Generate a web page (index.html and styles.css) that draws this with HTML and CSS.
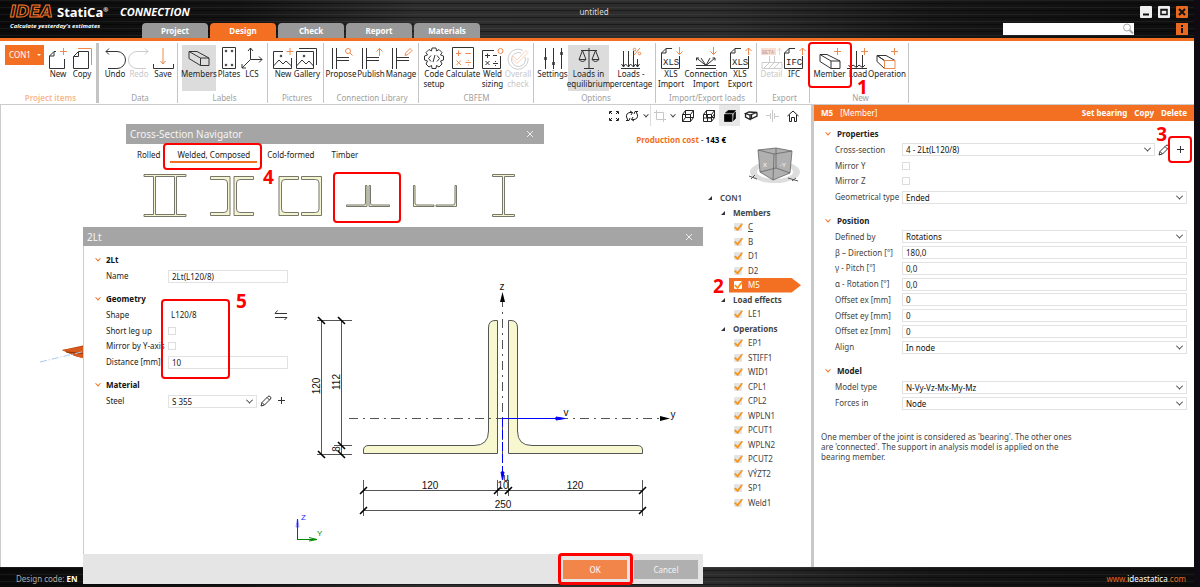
FILE: index.html
```html
<!DOCTYPE html>
<html lang="en">
<head>
<meta charset="utf-8">
<title>untitled - Connection</title>
<link rel="stylesheet" href="styles.css">
</head>
<body>
<svg class="defs" aria-hidden="true">
  <symbol id="box" viewBox="0 0 24 22"><path d="M2 4.500H10L22 11V18.500H13.500L2 11.500ZM2 4.500L13.500 11H22M13.500 11V18.500"/></symbol>
  <symbol id="pencil" viewBox="0 0 12 12"><path d="M1 11L2 7.500L8 1.500Q9 .5 10.300 1.700Q11.500 3 10.500 4L4.500 10ZM2 7.500L4.500 10M7 2.500L9.500 5"/></symbol>
  <symbol id="xdoc" viewBox="0 0 24 22"><path d="M13 1.500H7L2.500 6V21.500H20.500V9M7 1.500V6H2.500"/></symbol>
  <symbol id="frame" viewBox="0 0 24 22"><path d="M3.500 1V22M7.500 1V22M7.500 10.500H20M7.500 13.500H20"/></symbol>
</svg>
<div class="app">
  <header class="top">
    <div class="brand">
      <div class="logo"><span class="idea">IDEA</span><span class="statica">StatiCa<sup>®</sup></span><span class="product">CONNECTION</span></div>
      <div class="tagline">Calculate yesterday's estimates</div>
    </div>
    <div class="doc-title">untitled</div>
    <div class="win">
      <button aria-label="Minimize"><svg viewBox="0 0 12 12"><path d="M3 8.500H9" stroke-width="2"/></svg></button>
      <button aria-label="Maximize"><svg viewBox="0 0 12 12"><path d="M3 3.500H9V8.500H3ZM3 4H9" stroke-width="1.500"/></svg></button>
      <button class="hot" aria-label="Close"><svg viewBox="0 0 12 12"><path d="M3 3L9 9M9 3L3 9" stroke-width="2"/></svg></button>
    </div>
    <nav class="tabs">
      <button>Project</button><button class="on">Design</button><button>Check</button><button>Report</button><button>Materials</button>
    </nav>
    <div class="find">
      <div class="search"><input type="search" aria-label="Search"><svg viewBox="0 0 12 12"><circle cx="5" cy="4.500" r="3.500"/><path d="M7.500 7L11 10.500" stroke-width="2"/></svg></div>
      <button class="info" aria-label="Info"><svg viewBox="0 0 12 12"><path d="M6 2V4M6 5V10" stroke-width="2"/></svg></button>
    </div>
  </header>

  <div class="ribbon">
    <section class="group g-project">
      <div class="tools">
        <button class="combo">CON1 <i class="caret"></i></button>
        <button class="tool"><svg viewBox="0 0 24 22"><path d="M10 4.500H8L3.500 9V21.500H18.500V12M8 4.500V9H3.500"/><path class="o" d="M17.500 1V8M14 4.500H21"/></svg>New</button>
        <button class="tool"><svg viewBox="0 0 24 22"><path d="M8.500 4.500H18.500V21.500H3.500V9.500ZM8.500 4.500V9.500H3.500"/><path class="o" d="M8 1.500H21.500V18"/></svg>Copy</button>
      </div>
      <h2>Project items</h2>
    </section>
    <section class="group g-data">
      <div class="tools">
        <button class="tool"><svg viewBox="0 0 24 22"><path d="M3 4.500H14A8.500 8.500 0 0 1 14 21.500H5M6 1.500L3 4.500L6 7.500"/></svg>Undo</button>
        <button class="tool" disabled><svg viewBox="0 0 24 22"><path d="M21 4.500H10A8.500 8.500 0 0 0 10 21.500H19M18 1.500L21 4.500L18 7.500"/></svg>Redo</button>
        <button class="tool"><svg viewBox="0 0 24 22"><path d="M2.500 17V21.500H22.500V17"/><path class="o" d="M12 1V17M9.500 14L12 17L14.500 14"/></svg>Save</button>
      </div>
      <h2>Data</h2>
    </section>
    <section class="group g-labels">
      <div class="tools">
        <button class="tool on"><svg><use href="#box"/></svg>Members</button>
        <button class="tool"><svg viewBox="0 0 24 22"><path d="M5.500 .5H18.500V21.500H5.500Z"/><g class="d"><circle cx="9" cy="4" r="1"/><circle cx="15" cy="4" r="1"/><circle cx="9" cy="18" r="1"/><circle cx="15" cy="18" r="1"/></g></svg>Plates</button>
        <button class="tool"><svg viewBox="0 0 24 22"><path d="M10.500 12.500V1M8 4L10.500 1L13 4M10.500 12.500H22M19 9.500L22 12.500L19 15.500M10.500 12.500L2 21M2 17V21H6"/></svg>LCS</button>
      </div>
      <h2>Labels</h2>
    </section>
    <section class="group g-pics">
      <div class="tools">
        <button class="tool"><svg viewBox="0 0 24 22"><path d="M12 4.500H2.500V21.500H20.500V11M2.500 19L8 13L12 17L15 14L20.500 19"/><circle class="d" cx="10" cy="9" r="1"/><path class="o" d="M19 1V8M15.500 4.500H22.500"/></svg>New</button>
        <button class="tool"><svg viewBox="0 0 24 22"><path d="M1.500 4.500H18.500V21.500H1.500ZM1.500 19L7 13L11 17L14 14L18.500 19M4 1.500H21.500V18"/><circle class="d" cx="9" cy="9" r="1"/></svg>Gallery</button>
      </div>
      <h2>Pictures</h2>
    </section>
    <section class="group g-lib">
      <div class="tools">
        <button class="tool"><svg viewBox="0 0 24 22"><use href="#frame"/><g class="o"><circle cx="19" cy="4" r="2.500"/><path d="M21 6L23.500 8.500"/></g></svg>Propose</button>
        <button class="tool"><svg viewBox="0 0 24 22"><use href="#frame"/><path class="o" d="M20.500 9V1.500M17.500 4.500L20.500 1.500L23.500 4.500"/></svg>Publish</button>
        <button class="tool"><svg viewBox="0 0 24 22"><use href="#frame"/><path class="o" d="M16 8.500L17 5.500L21 1.500L23 3.500L19 7.500Z"/></svg>Manage</button>
      </div>
      <h2>Connection Library</h2>
    </section>
    <section class="group g-cbfem">
      <div class="tools">
        <button class="tool"><svg viewBox="0 0 24 22"><path d="M10 1H14L14.500 4L17 2.500L20 5.500L18.500 8L21.500 9V13L18.500 14L20 17L17 20L14.500 18.500L14 21.500H10L9.500 18.500L7 20L4 17L5.500 14L2.500 13V9L5.500 8L4 5.500L7 2.500L9.500 4Z"/><path d="M9 8.500L6.500 11.500L9 14.500M15 8.500L17.500 11.500L15 14.500M13 8L11 15"/></svg>Code<br>setup</button>
        <button class="tool"><svg viewBox="0 0 24 22"><path d="M1.500 .5H22.500V21.500H1.500Z"/><path class="o" d="M7.500 3.500V9M5 6.500H10M14.500 6.500H20M5.500 13.500L10 18M10 13.500L5.500 18M14.500 15.500H20M17.300 13V14M17.300 17.500V18.500"/></svg>Calculate</button>
        <button class="tool"><svg viewBox="0 0 24 22"><path d="M13 3.500H1.500V21.500H19.500V9M6.500 6.500V11M4 8.500H9M12 8.500H16M4.500 14L8.500 18M8.500 14L4.500 18M12 16.500H17M14.500 14V15M14.500 18V19"/><circle class="o" cx="19.500" cy="4" r="2.500"/></svg>Weld<br>sizing</button>
        <button class="tool" disabled><svg viewBox="0 0 24 22"><path d="M17 3.500A10 10 0 1 0 22 11M15 6A7 7 0 1 0 19 10"/><path class="o" d="M7 9L11 13L20 3.500L22 5.500L11 16.500L5.500 11Z"/></svg>Overall<br>check</button>
      </div>
      <h2>CBFEM</h2>
    </section>
    <section class="group g-options">
      <div class="tools">
        <button class="tool"><svg viewBox="0 0 24 22"><path d="M4.500 1V22M12.500 1V22M20.500 1V22"/><path d="M4.500 10V13M12.500 15V18M20.500 5V8" stroke-width="2.500"/></svg>Settings</button>
        <button class="tool on"><svg viewBox="0 0 24 22"><path d="M12 1V21M7 21.500H17M4 3.500H20M5.500 3.500L2 12.500H9L5.500 3.500M18.500 3.500L15 12.500H22L18.500 3.500M2 12.500Q5.500 16.500 9 12.500M15 12.500Q18.500 16.500 22 12.500"/></svg>Loads in<br>equilibrium</button>
        <button class="tool"><svg viewBox="0 0 24 22"><path d="M2 21.500H21M4.500 4V20M9.500 4V20M14.500 4V20M18.500 12V20M2.500 17L4.500 20L6.500 17L9.500 20L11.500 17L14.500 20L16.500 17L18.500 20L20.500 17"/><g class="o"><path d="M15 8L21 1"/><circle cx="15.500" cy="2.500" r="1.300"/><circle cx="20.500" cy="6.500" r="1.300"/></g></svg>Loads -<br>percentage</button>
      </div>
      <h2>Options</h2>
    </section>
    <section class="group g-io">
      <div class="tools">
        <button class="tool"><svg viewBox="0 0 24 22"><use href="#xdoc"/><text x="4" y="18">XLS</text><path class="o" d="M20.500 0V7.500M17.500 4.500L20.500 7.500L23.500 4.500"/></svg>XLS<br>Import</button>
        <button class="tool"><svg viewBox="0 0 24 22"><path d="M2 18.500H22M2 21.500H22M12 18.500L2.500 11M5 11H2.500V13.500M12 18.500L21 11M18.500 11H21V13.500M7 11L12 18.500L16 11"/><path class="o" d="M19.500 0V7.500M16.500 4.500L19.500 7.500L22.500 4.500"/></svg>Connection<br>Import</button>
        <button class="tool"><svg viewBox="0 0 24 22"><use href="#xdoc"/><text x="4" y="18">XLS</text><path class="o" d="M20.500 8V1M17.500 4L20.500 1L23.500 4"/></svg>XLS<br>Export</button>
      </div>
      <h2>Import/Export loads</h2>
    </section>
    <section class="group g-export">
      <div class="tools">
        <button class="tool" disabled><svg viewBox="0 0 24 22"><path class="beta" d="M1 1H16V8H1Z"/><text class="tiny" x="2" y="7">BETA</text><path d="M2 15.500H22V21.500H2ZM4 21L9 16M9 21L14 16M14 21L19 16M9.500 9V15.500M14.500 9V15.500"/><path class="o" d="M19.500 8V1M17 4L19.500 1L22 4"/></svg>Detail</button>
        <button class="tool"><svg viewBox="0 0 24 22"><use href="#xdoc"/><text x="4" y="18">IFC</text><path class="o" d="M20.500 8V1M17.500 4L20.500 1L23.500 4"/></svg>IFC</button>
      </div>
      <h2>Export</h2>
    </section>
    <section class="group g-new">
      <div class="tools">
        <button class="tool"><svg viewBox="0 0 24 22"><path d="M2 7.500H9L22 14V21.500H13L2 14.500ZM2 7.500L13 14H22M13 14V21.500"/><path class="o" d="M19.500 1V8M16 4.500H23"/></svg>Member</button>
        <button class="tool"><svg viewBox="0 0 24 22"><path d="M1 21.500H21M4.500 15V20M10.500 4V20M16.500 8V20M2.500 18L4.500 20.500L7 18L10.500 20.500L13 18L16.500 20.500L19 18"/><path class="o" d="M18.500 1V8M15 4.500H22"/></svg>Load</button>
        <button class="tool"><svg viewBox="0 0 24 22"><path d="M9.500 13.500L2 8.500V14.500L9.500 21.500V13.500L2 8.500H11L20 13.500"/><path class="o" d="M9.500 13.500H20V21.500H9.500ZM19.500 1V8M16 4.500H23"/></svg>Operation</button>
      </div>
      <h2>New</h2>
    </section>
  </div>

  <main class="work">
    <div class="canvas">
      <svg class="beam" viewBox="0 0 50 24" aria-hidden="true"><path d="M22 8L50 2V18L35 14Z" fill="#b84a12"/><path d="M22 8L42 5L50 7V18L35 14Z" fill="#d9591a"/><path d="M26 10L50 12" stroke="#8d3408"/><path d="M0 20L50 8" fill="none" stroke="#a9c9ee" stroke-dasharray="7 2 1 2"/></svg>
      <div class="viewbar">
        <button aria-label="Zoom all"><svg viewBox="0 0 14 14"><path d="M2.500 5V2.500H5M9 2.500H11.500V5M11.500 9V11.500H9M5 11.500H2.500V9M3 3L5 5M11 3L9 5M11 11L9 9M3 11L5 9"/></svg></button>
        <button aria-label="Rotate"><svg viewBox="0 0 14 14"><path d="M5 2L7.500 3.500L6 6M7.500 3.500H5Q1 4 1.500 8L3 11.500M1 11.500H4L5 9M9 12L6.500 10.500L8 8M6.500 10.500H9Q13 10 12.500 6L11 2.500M13 2.500H10L9 5"/></svg></button>
        <button class="mini" aria-label="Rotate options"><i class="chev"></i></button>
        <button class="crop" disabled aria-label="Clip"><svg viewBox="0 0 14 14"><path d="M3.500 1V10.500H13M1 3.500H10.500V13"/></svg></button>
        <button class="mini" aria-label="Clip options"><i class="chev"></i></button>
        <button aria-label="Wireframe"><svg viewBox="0 0 14 14"><path d="M1.500 5.500L4.500 1.500H12.500L9.500 5.500ZM1.500 5.500V12.500H9.500V5.500M12.500 1.500V8.500L9.500 12.500M4.500 1.500V8.500H12.500M1.500 12.500L4.500 8.500"/></svg></button>
        <button aria-label="Transparent"><svg viewBox="0 0 14 14"><path d="M1.500 5.500L4.500 1.500H12.500L9.500 5.500ZM1.500 5.500V12.500H9.500V5.500M12.500 1.500V8.500L9.500 12.500M5.500 5.500V12.500M1.500 9H9.500L12.500 5M4.500 1.500V8.500H12.500"/></svg></button>
        <button class="on" aria-label="Solid"><svg viewBox="0 0 14 14"><path d="M1.500 5.500H9V12.500H1.500Z" fill="#000"/><path d="M2.500 4L5 1.500H12.500L10.500 4ZM11 5L12.500 3V9.500L10.500 11.500Z" fill="#000"/></svg></button>
        <button aria-label="Members"><svg viewBox="0 0 14 14"><path d="M1.500 4.500L5 3L13 3.500L6 6ZM1.500 4.500V8L6 10.500V6M6 10.500L13 7V3.500M7.500 6V9.500" stroke-width="1.300"/></svg></button>
        <button disabled aria-label="Mirror"><svg viewBox="0 0 14 14"><path d="M7.500 1V13M1 6.500H5.500V4M5.500 6.500V10M14 7.500H9.500V4M9.500 7.500V10"/></svg></button>
        <button aria-label="Home"><svg viewBox="0 0 14 14"><path d="M1.500 7L7 2L12.500 7M3.500 6V12.500H5.500V8.500H8.500V12.500H10.500V6"/></svg></button>
      </div>
      <p class="cost"><b>Production cost</b> - <strong>143 €</strong></p>
      <svg class="viewcube" viewBox="0 0 54 40" aria-hidden="true"><ellipse cx="27" cy="26" rx="25" ry="11" fill="#ddd" stroke="none"/><ellipse cx="27" cy="26" rx="18" ry="7" fill="#fff" stroke="none"/><path d="M10 4L28 2L44 5L42 27L25 34L12 26Z" fill="#b0b0b0" stroke="#666" stroke-width=".8"/><path d="M10 4L26 8L44 5M26 8L25 34M28 2V22L12 26M28 22L42 27" fill="none" stroke="#666" stroke-width=".8"/><path d="M1 30L9 33M3 33L7 29M40 32L50 35M44 35L48 32" stroke="#555"/><g class="cube-text"><text x="15" y="21">X</text><text x="32" y="21">-Y</text></g></svg>
      <ul class="tree">
        <li class="root"><i></i>CON1</li>
        <li class="branch"><i></i>Members</li>
        <li><label><input type="checkbox" checked><u>C</u></label></li>
        <li><label><input type="checkbox" checked>B</label></li>
        <li><label><input type="checkbox" checked>D1</label></li>
        <li><label><input type="checkbox" checked>D2</label></li>
        <li class="sel"><label><input type="checkbox" checked>M5</label></li>
        <li class="branch"><i></i>Load effects</li>
        <li><label><input type="checkbox" checked>LE1</label></li>
        <li class="branch"><i></i>Operations</li>
        <li><label><input type="checkbox" checked>EP1</label></li>
        <li><label><input type="checkbox" checked>STIFF1</label></li>
        <li><label><input type="checkbox" checked>WID1</label></li>
        <li><label><input type="checkbox" checked>CPL1</label></li>
        <li><label><input type="checkbox" checked>CPL2</label></li>
        <li><label><input type="checkbox" checked>WPLN1</label></li>
        <li><label><input type="checkbox" checked>PCUT1</label></li>
        <li><label><input type="checkbox" checked>WPLN2</label></li>
        <li><label><input type="checkbox" checked>PCUT2</label></li>
        <li><label><input type="checkbox" checked>VÝZT2</label></li>
        <li><label><input type="checkbox" checked>SP1</label></li>
        <li><label><input type="checkbox" checked>Weld1</label></li>
      </ul>
    </div>

    <aside class="panel">
      <div class="panel-head"><b>M5</b><span>[Member]</span><button class="push">Set bearing</button><button>Copy</button><button>Delete</button></div>
      <div class="props">
        <h3><i class="chev"></i>Properties</h3>
        <div class="rows rows-4">
          <div class="row"><label for="cs">Cross-section</label><span class="sel-wrap"><select id="cs"><option>4 - 2Lt(L120/8)</option></select></span><button class="ico" aria-label="Edit cross-section"><svg><use href="#pencil"/></svg></button><button class="ico add" aria-label="New cross-section"><svg viewBox="0 0 12 12"><path d="M5.500 2V9M2 5.500H9"/></svg></button></div>
          <div class="row"><label for="my">Mirror Y</label><input id="my" type="checkbox"></div>
          <div class="row"><label for="mz">Mirror Z</label><input id="mz" type="checkbox"></div>
          <div class="row"><label for="gt">Geometrical type</label><span class="sel-wrap"><select id="gt"><option>Ended</option></select></span></div>
        </div>
        <h3><i class="chev"></i>Position</h3>
        <div class="rows rows-8">
          <div class="row"><label for="db">Defined by</label><span class="sel-wrap"><select id="db"><option>Rotations</option></select></span></div>
          <div class="row"><label for="b">β – Direction [°]</label><input id="b" type="text" value="180,0"></div>
          <div class="row"><label for="g">γ - Pitch [°]</label><input id="g" type="text" value="0,0"></div>
          <div class="row"><label for="a">α - Rotation [°]</label><input id="a" type="text" value="0,0"></div>
          <div class="row"><label for="ex">Offset ex [mm]</label><input id="ex" type="text" value="0"></div>
          <div class="row"><label for="ey">Offset ey [mm]</label><input id="ey" type="text" value="0"></div>
          <div class="row"><label for="ez">Offset ez [mm]</label><input id="ez" type="text" value="0"></div>
          <div class="row"><label for="al">Align</label><span class="sel-wrap"><select id="al"><option>In node</option></select></span></div>
        </div>
        <h3><i class="chev"></i>Model</h3>
        <div class="rows rows-2">
          <div class="row"><label for="mt">Model type</label><span class="sel-wrap"><select id="mt"><option>N-Vy-Vz-Mx-My-Mz</option></select></span></div>
          <div class="row"><label for="fi">Forces in</label><span class="sel-wrap"><select id="fi"><option>Node</option></select></span></div>
        </div>
      </div>
      <p class="hint">One member of the joint is considered as 'bearing'. The other ones are 'connected'. The support in analysis model is applied on the bearing member.</p>
    </aside>
  </main>

  <footer class="status"><span>Design code: <b>EN</b></span><a href="#"><em>www.</em>ideastatica<em>.com</em></a></footer>

  <div class="dialog navigator" role="dialog" aria-label="Cross-Section Navigator">
    <div class="dialog-head">Cross-Section Navigator<button aria-label="Close"><svg viewBox="0 0 8 8"><path d="M1 1L7 7M7 1L1 7"/></svg></button></div>
    <div class="nav-tabs"><button>Rolled</button><button class="on">Welded, Composed</button><button>Cold-formed</button><button>Timber</button></div>
    <div class="shapes">
      <button aria-label="Double I"><svg viewBox="0 0 46 48"><path d="M2 3.500H44V5.500H34.500V43.500H44V45.500H2V43.500H11.500V5.500H2ZM13.500 5.500V43.500H32.500V5.500Z" fill-rule="evenodd"/></svg></button>
      <button aria-label="Back to back channels"><svg viewBox="0 0 46 48"><path d="M1.500 5.500H21V44.500H1.500V41.500H15Q18.500 41.500 18.500 38V12Q18.500 8.500 15 8.500H1.500ZM44.500 5.500H25V44.500H44.500V41.500H31Q27.500 41.500 27.500 38V12Q27.500 8.500 31 8.500H44.500Z"/></svg></button>
      <button aria-label="Facing channels"><svg viewBox="0 0 46 48"><path d="M21.500 5.500H2V44.500H21.500V41.500H8Q4.500 41.500 4.500 38V12Q4.500 8.500 8 8.500H21.500ZM24.500 5.500H44.500V44.500H24.500V41.500H38.500Q42 41.500 42 38V12Q42 8.500 38.500 8.500H24.500Z"/></svg></button>
      <button aria-label="Double L back to back"><svg viewBox="0 0 46 48"><path d="M20.500 14.500H22V35.500H1.500V34H19Q20.500 34 20.500 32ZM25.500 14.500H24V35.500H44.500V34H27Q25.500 34 25.500 32Z"/></svg></button>
      <button aria-label="Double L facing"><svg viewBox="0 0 46 48"><path d="M1.500 14.500H3V32Q3 34 5 34H22V35.500H1.500ZM44.500 14.500H43V32Q43 34 41 34H24V35.500H44.500Z"/></svg></button>
      <button aria-label="Welded I"><svg viewBox="0 0 46 48"><path d="M12.500 3.500H34.500V5.500H24.500V43.500H34.500V45.500H12.500V43.500H22.500V5.500H12.500Z"/></svg></button>
    </div>
  </div>

  <div class="dialog editor" role="dialog" aria-label="2Lt">
    <div class="dialog-head">2Lt<button aria-label="Close"><svg viewBox="0 0 8 8"><path d="M1 1L7 7M7 1L1 7"/></svg></button></div>
    <div class="editor-body">
      <div class="props">
        <h3><i class="chev"></i>2Lt</h3>
        <div class="rows rows-1"><div class="row"><label for="nm">Name</label><input id="nm" type="text" value="2Lt(L120/8)"></div></div>
        <h3><i class="chev"></i>Geometry</h3>
        <div class="rows rows-4">
          <div class="row"><span class="lab">Shape</span><span class="val">L120/8</span><button class="ico swap" aria-label="Swap shape"><svg viewBox="0 0 14 12"><path d="M3.500 1.500L1 4.500H13M10.500 11L13 8.500H1"/></svg></button></div>
          <div class="row"><label for="sl">Short leg up</label><input id="sl" type="checkbox"></div>
          <div class="row"><label for="ym">Mirror by Y-axis</label><input id="ym" type="checkbox"></div>
          <div class="row"><label for="ds">Distance [mm]</label><input id="ds" type="text" value="10"></div>
        </div>
        <h3><i class="chev"></i>Material</h3>
        <div class="rows rows-1"><div class="row"><label for="st">Steel</label><span class="sel-wrap"><select id="st"><option>S 355</option></select></span><button class="ico" aria-label="Edit material"><svg><use href="#pencil"/></svg></button><button class="ico add" aria-label="New material"><svg viewBox="0 0 12 12"><path d="M5.500 2V9M2 5.500H9"/></svg></button></div></div>
      </div>
      <svg class="drawing" viewBox="301 246 402 308" role="img" aria-label="Section 2Lt">
        <g fill="#f8f8d0" stroke="#555"><path d="M497.500 320.500V453.500H363.500V450Q363.500 445.500 369 445.500H474Q488.500 445.500 488.500 431V328Q488.500 320.500 495 320.500Z"/><path d="M508.500 320.500V453.500H642.500V450Q642.500 445.500 637 445.500H532Q517.500 445.500 517.500 431V328Q517.500 320.500 511 320.500Z"/></g>
        <g fill="none" stroke="#555"><path d="M349 418.500H664" stroke-dasharray="9 5 2 5"/><path d="M502.500 298V470" stroke-dasharray="9 5 2 5"/><path d="M321.500 320V454M341.500 320V454M317 320.500H352M334 445.500H352M317 454.500H352M363.500 480V516M642.500 480V516M497.500 480V496M508.500 480V496M363 490.500H643M363 510.500H643"/></g>
        <path class="slash" d="M318 317L325 324M338 317L345 324M338 442L345 449M318 451L325 458M338 451L345 458M360 494L367 487M494 494L501 487M505 494L512 487M639 494L646 487M360 514L367 507M639 514L646 507"/>
        <path d="M502.500 292L505 302H500ZM670 418.500L660 416V421Z"/>
        <g stroke="#00f" fill="#00f"><path d="M502 418.500H558" fill="none"/><path d="M502.500 418V472" stroke-dasharray="9 3" fill="none"/><path d="M565 418.500L556 417V420ZM502.500 480L501 472H504Z"/></g>
        <g class="dims"><text x="502" y="290">z</text><text x="673" y="418">y</text><text x="566" y="416">v</text><text x="506" y="481">u</text><text x="430" y="489">120</text><text x="503" y="489">10</text><text x="575" y="489">120</text><text x="503" y="508">250</text><text transform="translate(320 386) rotate(-90)">120</text><text transform="translate(340 382) rotate(-90)">112</text><text transform="translate(340 449) rotate(-90)">8</text></g>
      </svg>
      <svg class="axes" viewBox="0 0 34 28" aria-hidden="true"><path d="M4.500 26V6" stroke="#22f"/><path d="M4.500 6L3 14H6Z" stroke="#22f" stroke-width=".5"/><path d="M4 26.500H24M16 24.500L24 26.500L16 28" stroke="#080" fill="none"/><text x="8" y="7" fill="#22f">Z</text><text x="24" y="23" fill="#080">Y</text></svg>
    </div>
    <div class="dialog-foot"><button class="ok">OK</button><button>Cancel</button></div>
  </div>

  <div class="mark m1"></div><div class="mark m3"></div><div class="mark m4a"></div><div class="mark m4b"></div><div class="mark m5"></div><div class="mark m6"></div>
  <b class="num n1">1</b><b class="num n2">2</b><b class="num n3">3</b><b class="num n4">4</b><b class="num n5">5</b>
</div>
</body>
</html>
```
FILE: styles.css
```css
* { box-sizing: border-box; }
body { margin: 0; background: #100b12; font: 8px/10px "Noto Sans", "Open Sans", sans-serif; color: #222; }
button, input, select { font: inherit; color: inherit; margin: 0; padding: 0; border: 0; background: none; border-radius: 0; outline: none; }
button { white-space: nowrap; }
h2, h3, p, ul { margin: 0; padding: 0; font-size: inherit; }
svg { display: block; fill: none; stroke: #333; overflow: visible; }
.defs { position: absolute; width: 0; height: 0; }
.app { position: relative; display: flex; flex-direction: column; min-height: 100vh; margin-right: 6px; }

.top, .status {
  background: repeating-linear-gradient(180deg, rgba(255,255,255,.06) 0 1px, transparent 1px 3px, rgba(0,0,0,.4) 3px 4px, transparent 4px 7px),
    linear-gradient(90deg, #0a0a0a, #131313 20%, #2d2d2d 35%, #2c2c2c 60%, #161616 78%, #0d0d0d);
}
.top { display: grid; grid-template-columns: 142px 1fr auto; grid-template-rows: 23px 15px; border-bottom: 3px solid #f36f21; height: 41px; }
.brand { grid-area: 1 / 1 / 3 / 2; padding: 3px 0 0 10px; color: #fff; }
.logo { display: flex; align-items: center; height: 18px; white-space: nowrap; font-weight: 700; }
.logo span { flex: none; }
.idea { font: italic 700 16px/16px "DejaVu Sans", sans-serif; color: #111; -webkit-text-stroke: 1px #ff7a26; width: 47px; }
.statica { font-size: 13px; width: 63px; }
.statica sup { font-size: 6px; line-height: 6px; }
.product { font: italic 700 11px/12px "Open Sans", sans-serif; }
.tagline { font: italic 700 6px/10px "Open Sans", sans-serif; }
.doc-title { grid-area: 1 / 1 / 2 / 4; text-align: center; padding: 7px 6px 0 0; color: #ddd; }
.win { grid-area: 1 / 3; display: flex; justify-content: flex-end; gap: 6px; padding: 6px 6px 0 0; }
.win button { width: 12px; height: 12px; background: #eee; border-radius: 1px; }
.win .hot, .info { background: #e8691f; }
.win svg, .info svg { width: 12px; height: 12px; stroke: #111; }
.tabs { display: flex; gap: 2px; }
.tabs button { width: 66px; height: 15px; background: #999; color: #fff; font-weight: 700; border-radius: 4px 4px 0 0; }
.tabs .on { background: #f36f21; }
.find { display: flex; gap: 42px; padding-right: 6px; }
.search { display: flex; width: 131px; height: 12px; background: #fff; }
.search input { flex: 1; min-width: 0; appearance: none; }
.search svg { width: 12px; height: 12px; stroke: #aaa; }
.info { width: 12px; height: 12px; }

.ribbon { display: flex; background: #fff; height: 64px; border-bottom: 1px solid #ccc; }
.group { display: flex; flex-direction: column; justify-content: space-between; margin-top: 2px; border-right: 1px solid #c4c4c4; padding: 2px 0 0 3px; height: 60px; }
.tools { display: grid; height: 46px; }
.group h2 { font-weight: 400; text-align: center; color: #a0a0a0; height: 10px; white-space: nowrap; }
.g-project { width: 99px; border-right-width: 3px; padding-left: 5px; } .g-project .tools { grid-template-columns: 41px 24px 24px; }
.group.g-project h2 { color: #f9b78f; font-weight: 600; }
.g-data { width: 79px; padding-left: 4px; } .g-data .tools { grid-template-columns: 24px 24px 24px; }
.g-labels { width: 90px; padding-left: 4px; } .g-labels .tools { grid-template-columns: 34px 26px 20px; }
.g-pics { width: 56px; } .g-pics .tools { grid-template-columns: 24px 24px; }
.g-lib { width: 95px; padding-left: 2px; } .g-lib .tools { grid-template-columns: 30px 30px 30px; }
.g-cbfem { width: 115px; padding-left: 1px; } .g-cbfem .tools { grid-template-columns: 28px 30px 29px 22px; }
.g-options { width: 122px; } .g-options .tools { grid-template-columns: 31px 41px 44px; }
.g-io { width: 101px; padding-left: 2px; } .g-io .tools { grid-template-columns: 26px 44px 24px; }
.g-export { width: 53px; } .g-export .tools { grid-template-columns: 23px 22px; }
.g-new { width: 99px; } .g-new .tools { grid-template-columns: 33px 24px 34px; }
.tool { display: flex; flex-direction: column; align-items: center; text-align: center; line-height: 10px; height: 46px; padding-top: 2px; }
.tool svg { width: 24px; height: 22px; flex: none; }
.tool.on { background: #dcdcdc; }
.tool:disabled { color: #c8c8c8; }
.tool:disabled svg { stroke: #ccc; }
.tool svg .o { stroke: #ee8a50; }
.tool:disabled svg .o { stroke: #fbd3bd; }
.tool .d { fill: #333; stroke-width: .5px; }
.tool text { font: 9px "Liberation Mono", monospace; fill: #222; stroke: none; }
.tool .tiny { font-size: 5px; fill: #b99; }
.tool .beta { fill: #f8ddd0; stroke: none; }
.combo { display: flex; align-items: center; justify-content: space-between; width: 39px; height: 20px; padding: 0 3px 0 4px; background: #f36f21; color: #fff; }
.caret { border: 2px solid transparent; border-top-color: #fff; border-bottom: 0; }

.work { flex: 1; display: flex; background: #fff; }
.canvas { position: relative; flex: 1; display: flex; flex-direction: column; align-items: flex-end; border-left: 1px solid #ccc; border-right: 3px solid #c9c9c9; }
.beam { position: absolute; left: 39px; top: 237px; width: 50px; height: 24px; stroke: none; }
.viewbar { display: flex; height: 21px; padding-right: 8px; }
.viewbar button { display: flex; width: 21px; align-items: center; justify-content: center; }
.viewbar button:first-child { width: 18px; }
.viewbar button:nth-child(2) { width: 18px; }
.viewbar svg { flex: none; width: 14px; height: 14px; stroke: #222; }
.viewbar .mini { width: 9px; }
.viewbar .crop { width: 18px; border-left: 1px solid #ddd; }
.viewbar button:disabled svg { stroke: #c8c8c8; }
.viewbar .on { background: #e8e8e8; }
.chev { display: block; flex: none; width: 4px; height: 4px; border: solid #444; border-width: 0 1px 1px 0; transform: rotate(45deg) translate(-1px, -1px); }
.cost { margin: 9px 85px 0 0; white-space: nowrap; }
.cost b { color: #f36f21; } .cost strong { color: #000; }
.viewcube { width: 54px; height: 40px; margin: 1px 9px 0 0; }
.cube-text { font: 6px "Liberation Sans", sans-serif; fill: #fff; stroke: none; }
.tree { display: grid; grid-auto-rows: 1fr; list-style: none; width: 107px; min-height: 319px; margin-top: 5px; color: #444; }
.tree li { display: flex; align-items: center; padding-left: 30px; }
.tree label { display: flex; align-items: center; gap: 6px; }
.tree .root, .tree .branch { font-weight: 700; gap: 8px; }
.tree .root { padding-left: 4px; font-weight: 600; } .tree .branch { padding-left: 17px; }
.tree li i { border: 2px solid transparent; border-right-color: #333; border-bottom-color: #333; }
.tree .sel { margin: 0 10px 0 25px; padding-left: 5px; color: #fff; background: #f36f21; clip-path: polygon(0 0, 87% 0, 100% 50%, 87% 100%, 0 100%); }
.tree input { appearance: none; width: 8px; height: 8px; background: #e4e4e4; border-radius: 1px; }
.tree input::before { content: ""; display: block; width: 9px; height: 8px; background: #f7941d; clip-path: polygon(0 55%, 18% 42%, 38% 66%, 85% 0, 100% 10%, 42% 100%); }
.tree .sel input { background: #fff; }

.panel { width: 380px; }
.panel-head { display: flex; align-items: center; gap: 7px; height: 16px; padding: 0 7px; background: #f36f21; color: #fff; }
.panel-head button { font-weight: 700; } .panel-head .push { margin-left: auto; }
.props { padding: 5px 7px 0 10px; }
.props h3 { display: flex; align-items: center; gap: 7px; height: 16px; font-weight: 700; }
.props .chev { border-color: #f36f21; }
.props h3 .chev { margin-left: 2px; }
.rows { display: grid; grid-template-columns: minmax(0, 1fr); grid-auto-rows: 1fr; margin-bottom: 8px; padding-left: 11px; }
.rows-1 { min-height: 16px; } .rows-2 { min-height: 32px; } .rows-4 { min-height: 63px; } .rows-8 { min-height: 126px; }
.row { display: flex; align-items: center; }
.row label, .row .lab { flex: none; width: 67px; white-space: nowrap; color: #444; }
.row input[type=text], .row .sel-wrap { flex: 1; min-width: 0; height: 13px; border: 1px solid #e2e2e2; padding-left: 3px; line-height: 11px; }
.row .sel-wrap { display: flex; align-items: center; padding-right: 4px; }
.sel-wrap select { flex: 1; min-width: 0; appearance: none; color: #111; }
.sel-wrap::after { content: ""; width: 4px; height: 4px; border: solid #444; border-width: 0 1px 1px 0; transform: rotate(45deg) translate(-1px, -1px); }
.row input[type=checkbox] { appearance: none; width: 8px; height: 8px; border: 1px solid #ddd; }
.ico, .ico svg { width: 12px; height: 12px; }
.row .ico { margin-left: 3px; } .row .add { margin-left: 5px; }
.hint { width: 262px; margin: 21px 0 0; padding-left: 7px; color: #444; }

.status { display: flex; justify-content: space-between; align-items: center; height: 20px; padding: 4px 8px 0 16px; color: #aaa; }
.status b, .status a { color: #fff; text-decoration: none; }
.status em { font-style: normal; color: #e8691f; }

.dialog { position: absolute; background: #fff; }
.navigator { left: 126px; top: 124px; width: 418px; height: 103px; }
.editor { left: 83px; top: 227px; width: 620px; display: flex; flex-direction: column; }
.dialog-head { display: flex; justify-content: space-between; align-items: center; height: 20px; padding: 0 10px 0 4px; background: #a5a5a5; color: #f4f4f4; font-size: 10px; }
.editor .dialog-head { height: 19px; }
.dialog-head svg { width: 8px; height: 8px; stroke: #fff; stroke-width: .8px; }
.nav-tabs { display: flex; gap: 3px; padding: 5px 0 0 4px; height: 24px; }
.nav-tabs button { height: 14px; padding: 0 7px; border-bottom: 2px solid transparent; }
.nav-tabs .on { border-bottom-color: #f36f21; }
.shapes { display: grid; grid-template-columns: repeat(6, 1fr); width: 406px; margin: 3px 0 0 5px; }
.shapes svg { width: 46px; height: 48px; margin: 0 auto; fill: #f4f4d0; stroke: #77776a; }
.editor-body { display: grid; grid-template-columns: 217px 1fr; border-left: 1px solid #ccc; }
.editor .props { grid-area: 1 / 1; padding: 6px 13px 0 10px; }
.editor .rows { padding-left: 12px; margin-bottom: 7px; }
.editor .props h3 { color: #111; gap: 6px; }
.editor label, .editor .lab { width: 62px; color: #222; }
.editor .row .add { margin-left: 4px; }
.val { flex: 1; padding-left: 3px; }
.row .swap, .swap svg { width: 14px; }
.drawing { grid-area: 1 / 2; width: 402px; height: 308px; fill: #000; stroke: none; }
.slash { stroke: #000; stroke-width: 1.6px; fill: none; }
.dims { font: 10px "Liberation Sans", Arial, sans-serif; text-anchor: middle; fill: #111; stroke: none; }
.axes { grid-area: 1 / 1; align-self: end; justify-self: end; width: 34px; height: 28px; margin: 0 -26px 13px 0; font: 8px "Liberation Sans", sans-serif; }
.axes text { stroke: none; }
.dialog-foot { display: flex; justify-content: flex-end; gap: 7px; height: 30px; padding: 6px 5px 5px; background: #e5e5e5; }
.dialog-foot button { width: 64px; background: #b0b0b0; color: #f4f4f4; }
.dialog-foot .ok { background: #f2864a; color: #fff; }

.mark { position: absolute; border: 2px solid #f00; border-radius: 4px; pointer-events: none; }
.m1 { left: 808px; top: 42px; width: 44px; height: 46px; }
.m3 { right: 2px; top: 136px; width: 24px; height: 27px; }
.m4a { left: 163px; top: 143px; width: 99px; height: 27px; }
.m4b { left: 333px; top: 172px; width: 68px; height: 51px; }
.m5 { left: 161px; top: 299px; width: 69px; height: 80px; }
.m6 { left: 558px; top: 553px; width: 75px; height: 32px; border-width: 3px; }
.num { position: absolute; font-size: 19px; line-height: 20px; color: #f00; }
.n1 { left: 857px; top: 77px; } .n2 { left: 713px; top: 276px; } .n3 { right: 27px; top: 124px; } .n4 { left: 263px; top: 167px; } .n5 { left: 236px; top: 291px; }
```
